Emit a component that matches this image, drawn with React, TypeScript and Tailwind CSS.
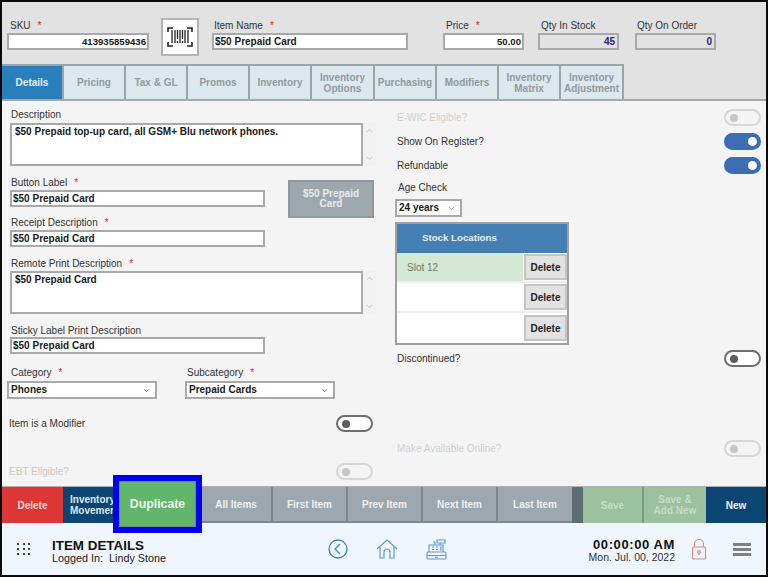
import { ChevronDown, ChevronUp } from "lucide-react";

const inputBox = "border-2 border-[#a9a9a9] bg-white text-[10px] font-bold text-[#1a1a1a] leading-none";

function Req({ children }: { children: string }) {
  return (
    <div className="text-[10px] leading-none text-[#333]">
      {children}
      <span className="ml-[7px] text-[#e02020]">*</span>
    </div>
  );
}

function Label({ children, className = "" }: { children: string; className?: string }) {
  return <div className={`text-[10px] leading-none text-[#333] ${className}`}>{children}</div>;
}

function Toggle({ state }: { state: "on" | "off" | "disabled" }) {
  if (state === "on") {
    return (
      <div className="flex h-[17px] w-[37px] items-center justify-end rounded-full bg-[#3b6cb4] pr-[4px]">
        <div className="h-[9px] w-[9px] rounded-full bg-white" />
      </div>
    );
  }
  if (state === "disabled") {
    return (
      <div className="flex h-[17px] w-[37px] items-center rounded-full border-2 border-[#d6d6d6] pl-[4px]">
        <div className="h-[8px] w-[8px] rounded-full bg-[#c6c6c6]" />
      </div>
    );
  }
  return (
    <div className="flex h-[17px] w-[37px] items-center rounded-full border-2 border-[#6e6e6e] bg-white pl-[4px]">
      <div className="h-[8px] w-[8px] rounded-full bg-[#5c5c5c]" />
    </div>
  );
}

function TextArea({ value }: { value: string }) {
  return (
    <div className="flex h-[43px] w-[366px]">
      <div className={`w-[353px] px-[3px] pt-[2px] ${inputBox}`}>{value}</div>
      <div className="flex w-[13px] flex-col items-center justify-between bg-[#f1f1f1] py-[3px] text-[#b4b4b4]">
        <ChevronUp size={9} />
        <ChevronDown size={9} />
      </div>
    </div>
  );
}

function TextInput({ value }: { value: string }) {
  return <div className={`flex h-[17px] w-[255px] items-center px-[1px] ${inputBox}`}>{value}</div>;
}

function SelectBox({ value, className }: { value: string; className: string }) {
  return (
    <div className={`flex items-center justify-between pl-[2px] pr-[4px] ${inputBox} ${className}`}>
      {value}
      <ChevronDown size={9} className="text-[#666]" />
    </div>
  );
}

function Tab({ label, active = false, w }: { label: string; active?: boolean; w: string }) {
  return (
    <div
      className={`flex h-full items-center justify-center border-r-2 border-t-2 border-[#9aa5a8] text-center text-[10px] font-bold leading-[11px] ${w} ${
        active ? "bg-[#2a7ebb] text-[#e4eff7]" : "bg-[#dbe8ed] text-[#909a9e]"
      }`}
    >
      {label}
    </div>
  );
}

function ActionBtn({ label, className }: { label: string; className: string }) {
  return (
    <div className={`flex h-full items-center justify-center whitespace-pre-line text-center text-[10px] font-bold leading-[11px] ${className}`}>
      {label}
    </div>
  );
}

function StockRow({ slot, green = false }: { slot?: string; green?: boolean }) {
  return (
    <div className="flex h-[30px] border-b-2 border-[#eeeeee] last:border-b-0">
      <div className={`flex w-[127px] items-center pl-[10px] text-[10px] text-[#6e7a6e] ${green ? "bg-[#d5e8d4]" : "bg-white"}`}>
        {slot}
      </div>
      <div className="flex flex-1 items-center bg-white pl-[1px]">
        <div className="flex h-[26px] w-[43px] items-center justify-center border-2 border-[#c4c4c4] bg-[#e2e2e2] text-[10px] font-bold text-[#222]">
          Delete
        </div>
      </div>
    </div>
  );
}

export default function App() {
  return (
    <div
      className="relative flex h-[577px] w-[768px] flex-col overflow-hidden bg-[#0a0a0a] pb-[2px] pl-[2px] pr-[2px] pt-[2px]"
      style={{ fontFamily: '"Liberation Sans", Arial, sans-serif' }}
    >
      {/* top item fields */}
      <div className="flex h-[62px] shrink-0 bg-[#e2e2e2] pl-[5px] pt-[19px]">
        <div className="w-[144px]">
          <div className="pl-[3px]">
            <Req>SKU</Req>
          </div>
          <div className={`mt-[2px] flex h-[17px] w-[142px] items-center justify-end pr-[1px] text-[9.6px]! ${inputBox}`}>413935859436</div>
        </div>
        <div className="-mt-[3px] ml-[10px] flex h-[38px] w-[38px] items-center justify-center border-2 border-[#b4b4b4] bg-white">
          <svg width="26" height="22" viewBox="0 0 26 22" fill="none" stroke="#222">
            <path d="M1 6V2h5M20 2h5v4M1 16v4h5M20 20h5v-4" strokeWidth="1.6" />
            <path d="M5 4v13M8 4v13M10.5 4v9M13 4v13M15.5 4v9M18 4v13M21 4v13" strokeWidth="1.3" />
            <path d="M10.5 15v2M15.5 15v2" strokeWidth="1.3" />
          </svg>
        </div>
        <div className="ml-[13px] w-[231px]">
          <div className="pl-[2px]">
            <Req>Item Name</Req>
          </div>
          <div className={`mt-[2px] flex h-[17px] w-[196px] items-center px-[1px] ${inputBox}`}>$50 Prepaid Card</div>
        </div>
        <div className="w-[95px]">
          <div className="pl-[3px]">
            <Req>Price</Req>
          </div>
          <div className={`mt-[2px] flex h-[17px] w-[81px] items-center justify-end pr-[1px] text-[9.6px]! ${inputBox}`}>50.00</div>
        </div>
        <div className="w-[97px]">
          <Label className="pl-[3px]">Qty In Stock</Label>
          <div className="mt-[2px] flex h-[17px] w-[81px] items-center justify-end border-2 border-[#a9a9a9] bg-[#e2e2e2] pr-[2px] text-[10px] font-bold text-[#23238e]">
            45
          </div>
        </div>
        <div className="w-[81px]">
          <Label className="pl-[2px]">Qty On Order</Label>
          <div className="mt-[2px] flex h-[17px] w-[81px] items-center justify-end border-2 border-[#a9a9a9] bg-[#e2e2e2] pr-[2px] text-[10px] font-bold text-[#23238e]">
            0
          </div>
        </div>
      </div>

      {/* tabs */}
      <div className="flex h-[37px] shrink-0 border-b-2 border-[#a3a9ab] bg-[#e2e2e2]">
        <Tab label="Details" active w="w-[62px]" />
        <Tab label="Pricing" w="w-[62px]" />
        <Tab label="Tax & GL" w="w-[62px]" />
        <Tab label="Promos" w="w-[62px]" />
        <Tab label="Inventory" w="w-[62px]" />
        <Tab label="Inventory Options" w="w-[63px]" />
        <Tab label="Purchasing" w="w-[62px]" />
        <Tab label="Modifiers" w="w-[62px]" />
        <Tab label="Inventory Matrix" w="w-[62px]" />
        <Tab label="Inventory Adjustment" w="w-[63px]" />
      </div>

      {/* form body */}
      <div className="flex min-h-0 flex-1 bg-[#f4f4f4]">
        <div className="w-[393px] pl-[8px] pt-[9px]">
          <Label className="pl-[1px]">Description</Label>
          <div className="mt-[3px]">
            <TextArea value="$50 Prepaid top-up card, all GSM+ Blu network phones." />
          </div>

          <div className="mt-[12px] flex">
            <div className="w-[278px]">
              <div className="pl-[1px]">
                <Req>Button Label</Req>
              </div>
              <div className="mt-[2px]">
                <TextInput value="$50 Prepaid Card" />
              </div>
            </div>
            <div className="mt-[2px] flex h-[38px] w-[86px] items-center justify-center border-2 border-[#8e989e] bg-[#9ca7ae] px-[8px] text-center text-[10px] font-bold leading-[10px] text-[#e8ecee]">
              $50 Prepaid Card
            </div>
          </div>

          <div className="pl-[1px]">
            <Req>Receipt Description</Req>
          </div>
          <div className="mt-[2px]">
            <TextInput value="$50 Prepaid Card" />
          </div>

          <div className="mt-[12px] pl-[1px]">
            <Req>Remote Print Description</Req>
          </div>
          <div className="mt-[2px]">
            <TextArea value="$50 Prepaid Card" />
          </div>

          <Label className="mt-[12px] pl-[1px]">Sticky Label Print Description</Label>
          <div className="mt-[1px]">
            <TextInput value="$50 Prepaid Card" />
          </div>

          <div className="mt-[14px] flex">
            <div className="w-[176px]">
              <div className="pl-[1px]">
                <Req>Category</Req>
              </div>
              <SelectBox value="Phones" className="ml-[-3px] mt-[3px] h-[18px] w-[150px]" />
            </div>
            <div>
              <div className="pl-[1px]">
                <Req>Subcategory</Req>
              </div>
              <SelectBox value="Prepaid Cards" className="ml-[-1px] mt-[3px] h-[18px] w-[150px]" />
            </div>
          </div>

          <div className="mt-[16px] flex h-[17px] w-[363px] items-center justify-between">
            <Label className="-ml-[1px]">Item is a Modifier</Label>
            <Toggle state="off" />
          </div>
          <div className="mt-[31px] flex h-[17px] w-[363px] items-center justify-between">
            <Label className="-ml-[1px] text-[#c8c8c8]">EBT Eligible?</Label>
            <Toggle state="disabled" />
          </div>
        </div>

        <div className="flex-1 pr-[5px] pt-[8px]">
          <div className="flex h-[17px] items-center justify-between pl-[2px]">
            <Label className="text-[#d0d0d0]">E-WIC Eligible?</Label>
            <Toggle state="disabled" />
          </div>
          <div className="mt-[7px] flex h-[17px] items-center justify-between pl-[2px]">
            <Label>Show On Register?</Label>
            <Toggle state="on" />
          </div>
          <div className="mt-[7px] flex h-[17px] items-center justify-between pl-[2px]">
            <Label>Refundable</Label>
            <Toggle state="on" />
          </div>
          <Label className="mt-[9px] pl-[3px]">Age Check</Label>
          <SelectBox value="24 years" className="mt-[6px] h-[18px] w-[67px]" />

          <div className="mt-[5px] w-[174px] border-2 border-[#a0a0a0]">
            <div className="flex h-[29px] items-center bg-[#4480b4] pl-[25px] text-[9.7px] font-bold text-[#e6eff6]">Stock Locations</div>
            <StockRow slot="Slot 12" green />
            <StockRow />
            <StockRow />
          </div>

          <div className="mt-[5px] flex h-[17px] items-center justify-between pl-[2px]">
            <Label>Discontinued?</Label>
            <Toggle state="off" />
          </div>
          <div className="mt-[73px] flex h-[17px] items-center justify-between pl-[2px]">
            <Label className="text-[#d0d0d0]">Make Available Online?</Label>
            <Toggle state="disabled" />
          </div>
        </div>
      </div>

      {/* action bar */}
      <div className="flex h-[37px] shrink-0 border-t border-[#b0b0b0] bg-[#5f6d74]">
        <ActionBtn label="Delete" className="w-[61px] bg-[#dc3636] text-[#f4dcdc]" />
        <ActionBtn label={"Inventory\nMovement"} className="w-[51px] justify-start whitespace-nowrap bg-[#0b4672] pl-[7px] text-left text-[#dfe8ee]" />
        <div className="w-[87px] bg-[#9ca7ae]" />
        <ActionBtn label="All Items" className="w-[72px] border-b-2 border-r-2 border-[#7d878d] bg-[#9ca7ae] text-[#eef2f3]" />
        <ActionBtn label="First Item" className="w-[75px] border-b-2 border-r-2 border-[#7d878d] bg-[#9ca7ae] text-[#eef2f3]" />
        <ActionBtn label="Prev Item" className="w-[75px] border-b-2 border-r-2 border-[#7d878d] bg-[#9ca7ae] text-[#eef2f3]" />
        <ActionBtn label="Next Item" className="w-[75px] border-b-2 border-r-2 border-[#7d878d] bg-[#9ca7ae] text-[#eef2f3]" />
        <ActionBtn label="Last Item" className="w-[74px] border-b-2 border-[#7d878d] bg-[#9ca7ae] text-[#eef2f3]" />
        <div className="w-[11px]" />
        <ActionBtn label="Save" className="w-[61px] border-r-2 border-[#7f9c82] bg-[#9cc19e] text-[#c6dcc7]" />
        <ActionBtn label={"Save &\nAdd New"} className="w-[62px] bg-[#9cc19e] text-[#c6dcc7]" />
        <ActionBtn label="New" className="flex-1 bg-[#0b4672] text-[#eef2f3]" />
      </div>

      {/* footer */}
      <div className="flex h-[52px] shrink-0 items-center bg-[#eff6fe]">
        <div className="ml-[15px] grid w-[14px] grid-cols-3 gap-[3px]">
          {Array.from({ length: 9 }).map((_, i) => (
            <div key={i} className="h-[2px] w-[2px] bg-[#444]" />
          ))}
        </div>
        <div className="ml-[21px] mt-[3px] w-[276px]">
          <div className="text-[13.4px] font-bold leading-[15px] text-[#111]">ITEM DETAILS</div>
          <div className="-mt-[1px] text-[10.8px] leading-[12px] text-[#222]">Logged In:&nbsp; Lindy Stone</div>
        </div>
        <svg width="20" height="20" viewBox="0 0 20 20" fill="none" stroke="#3a86c8" strokeWidth="1.3">
          <circle cx="10" cy="10" r="9" />
          <path d="M12 5l-5 5 5 5" />
        </svg>
        <svg className="ml-[28px]" width="22" height="20" viewBox="0 0 22 20" fill="none" stroke="#5a9ad2" strokeWidth="1.2">
          <path d="M1 10L11 1l10 9" />
          <path d="M4 8v11h4v-6a3 3 0 0 1 6 0v6h4V8" />
        </svg>
        <svg className="ml-[28px]" width="21" height="21" viewBox="0 0 21 21" fill="none" stroke="#5a9ad2" strokeWidth="1.1">
          <path d="M11 1h8v3h-8zM14 4v2" />
          <path d="M3 13V6h14v7" />
          <path d="M7 3h2v3M6 8h2M6 10.5h2M10 8h2M10 10.5h2M14 8h1v3h-1" />
          <rect x="1" y="13" width="19" height="7" rx="1" />
          <path d="M1 16.5h19M9 18.3h3" />
        </svg>
        <div className="ml-[86px] mt-[3px] w-[142px] text-right">
          <div className="text-[13px] font-bold leading-[14px] tracking-[0.6px] text-[#111]">00:00:00 AM</div>
          <div className="text-[10.5px] leading-[11px] text-[#333]">Mon. Jul. 00, 2022</div>
        </div>
        <svg className="ml-[16px]" width="16" height="21" viewBox="0 0 16 21" fill="none" stroke="#e08a8a" strokeWidth="1.2">
          <rect x="1.5" y="8" width="13" height="12" rx="1" />
          <path d="M3.5 8V5a4.5 4.5 0 0 1 9 0v3" />
          <circle cx="8" cy="13" r="1.3" />
          <path d="M8 14v2" />
        </svg>
        <div className="ml-[26px] flex w-[18px] flex-col gap-[2px]">
          <div className="h-[3px] bg-[#808080]" />
          <div className="h-[3px] bg-[#808080]" />
          <div className="h-[3px] bg-[#808080]" />
        </div>
      </div>

      {/* highlighted callout */}
      <div className="absolute left-[113px] top-[475px] flex h-[58px] w-[89px] items-center justify-center border-[6px] border-[#0000f0] bg-[#62b66c] text-[12.3px] font-bold text-[#eef6ee] shadow-[inset_0_0_0_1px_#6d8f72]">
        Duplicate
      </div>
    </div>
  );
}
